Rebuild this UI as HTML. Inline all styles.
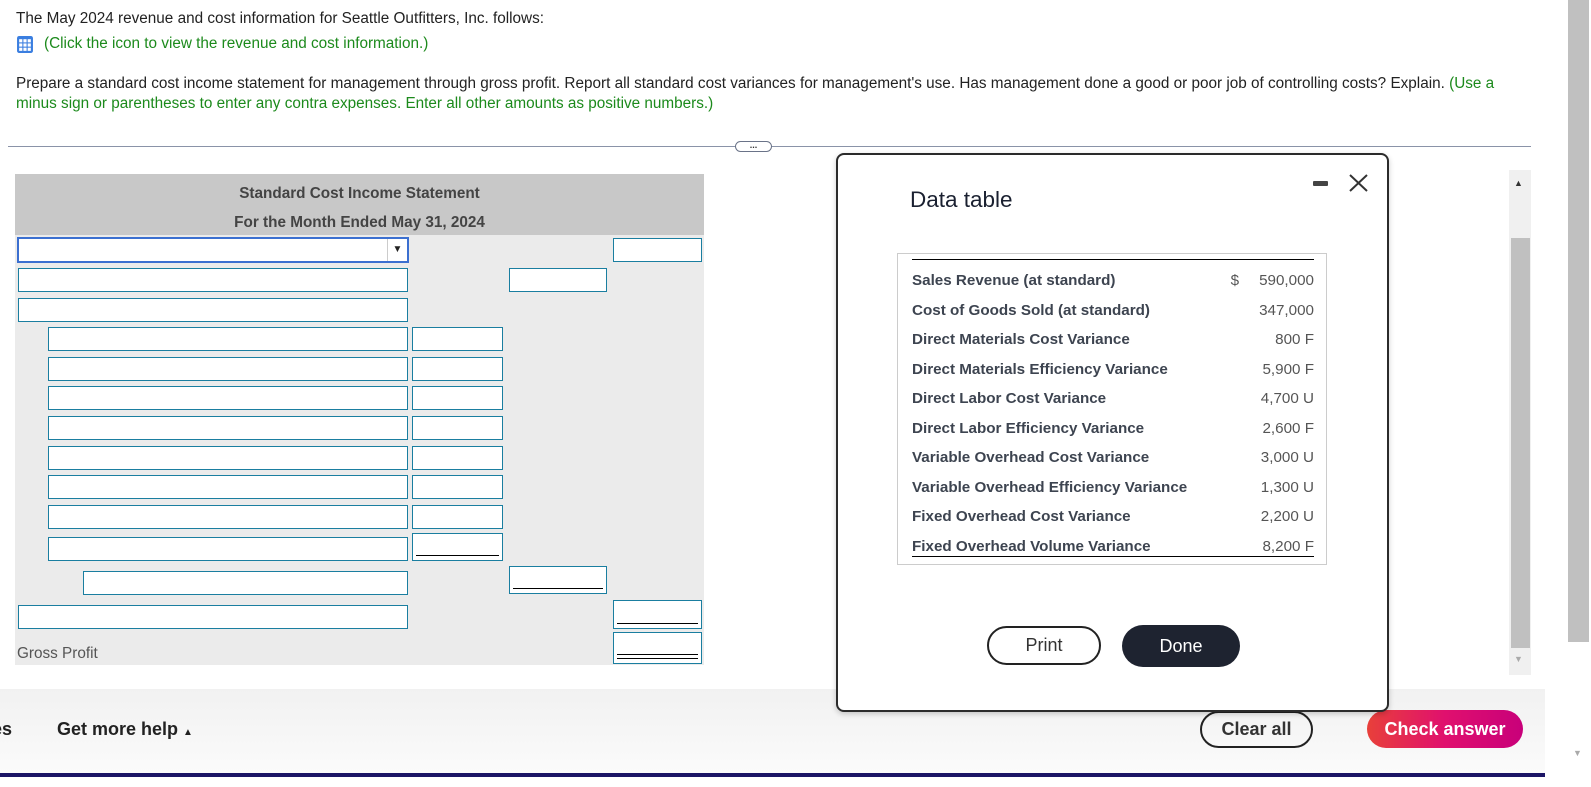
<!DOCTYPE html>
<html><head><meta charset="utf-8"><style>
*{margin:0;padding:0;box-sizing:border-box}
body{width:1591px;height:787px;position:relative;overflow:hidden;background:#fff;font-family:"Liberation Sans",Arial,sans-serif;color:#222}
.a{position:absolute}
.t{font-size:15.3px;white-space:nowrap}
.g{color:#1c8a1c}
.in{position:absolute;height:24px;border:1px solid #1a7ea0;background:#fff}
.ul::after{content:"";position:absolute;left:3px;right:3px;bottom:4px;border-top:1px solid #000}
.dul::after{content:"";position:absolute;left:3px;right:3px;bottom:4px;height:3px;border-top:1px solid #000;border-bottom:1px solid #000}
.row{position:absolute;left:912px;width:402px;font-size:15.2px;font-weight:bold;color:#3d4450}
.row span{position:absolute;right:0;font-weight:normal;color:#555}
</style></head><body>
<div class="a t" style="left:16px;top:10px">The May 2024 revenue and cost information for Seattle Outfitters, Inc. follows:</div>
<svg class="a" style="left:17px;top:36px" width="16" height="17" viewBox="0 0 15 16"><rect width="15" height="16" rx="2" fill="#3a7ee0"/><g fill="#fff"><rect x="2" y="3" width="3" height="3"/><rect x="6" y="3" width="3" height="3"/><rect x="10" y="3" width="3" height="3"/><rect x="2" y="7" width="3" height="3"/><rect x="6" y="7" width="3" height="3"/><rect x="10" y="7" width="3" height="3"/><rect x="2" y="11" width="3" height="3"/><rect x="6" y="11" width="3" height="3"/><rect x="10" y="11" width="3" height="3"/></g></svg>
<div class="a t g" style="left:44px;top:35px">(Click the icon to view the revenue and cost information.)</div>
<div class="a t" style="left:16px;top:75px">Prepare a standard cost income statement for management through gross profit. Report all standard cost variances for management's use. Has management done a good or poor job of controlling costs? Explain. <span class="g">(Use a</span></div>
<div class="a t g" style="left:16px;top:95px">minus sign or parentheses to enter any contra expenses. Enter all other amounts as positive numbers.)</div>
<div class="a" style="left:8px;top:146px;width:1523px;border-top:1px solid #8a93a8"></div>
<div class="a" style="left:735px;top:141px;width:37px;height:11px;border:1px solid #6a7388;border-radius:6px;background:#fff;font-size:9px;line-height:6px;text-align:center;font-weight:bold;color:#333">...</div>

<div class="a" style="left:15px;top:174px;width:689px;height:61px;background:#c8c8c8"></div>
<div class="a" style="left:15px;top:235px;width:689px;height:430px;background:#ebebeb"></div>
<div class="a t" style="left:15px;width:689px;text-align:center;top:185px;font-weight:bold;color:#444">Standard Cost Income Statement</div>
<div class="a t" style="left:15px;width:689px;text-align:center;top:214px;font-weight:bold;color:#444">For the Month Ended May 31, 2024</div>

<div class="in" style="left:17px;top:237px;width:392px;height:26px;border:2px solid #3b6fd0"><div class="a" style="right:0;top:0;width:20px;height:22px;border-left:1px solid #ccc;font-size:10px;text-align:center;line-height:22px">▼</div></div>
<div class="in" style="left:613px;top:238px;width:89px"></div>
<div class="in" style="left:18px;top:268px;width:390px"></div>
<div class="in" style="left:509px;top:268px;width:98px"></div>
<div class="in" style="left:18px;top:298px;width:390px"></div>
<div class="in" style="left:48px;top:327px;width:360px"></div><div class="in" style="left:412px;top:327px;width:91px"></div>
<div class="in" style="left:48px;top:357px;width:360px"></div><div class="in" style="left:412px;top:357px;width:91px"></div>
<div class="in" style="left:48px;top:386px;width:360px"></div><div class="in" style="left:412px;top:386px;width:91px"></div>
<div class="in" style="left:48px;top:416px;width:360px"></div><div class="in" style="left:412px;top:416px;width:91px"></div>
<div class="in" style="left:48px;top:446px;width:360px"></div><div class="in" style="left:412px;top:446px;width:91px"></div>
<div class="in" style="left:48px;top:475px;width:360px"></div><div class="in" style="left:412px;top:475px;width:91px"></div>
<div class="in" style="left:48px;top:505px;width:360px"></div><div class="in" style="left:412px;top:505px;width:91px"></div>
<div class="in" style="left:48px;top:537px;width:360px"></div><div class="in ul" style="left:412px;top:533px;width:91px;height:28px"></div>
<div class="in" style="left:83px;top:571px;width:325px"></div><div class="in ul" style="left:509px;top:566px;width:98px;height:28px"></div>
<div class="in" style="left:18px;top:605px;width:390px"></div><div class="in ul" style="left:613px;top:600px;width:89px;height:29px"></div>
<div class="a t" style="left:17px;top:645px;color:#555">Gross Profit</div>
<div class="in dul" style="left:613px;top:632px;width:89px;height:32px"></div>

<div class="a" style="left:0;top:689px;width:1545px;height:84px;background:linear-gradient(#f1f1f1,#fbfbfb)"></div>
<div class="a" style="left:0;top:773px;width:1545px;height:4px;background:#1c1566"></div>
<div class="a" style="left:-8px;top:719px;font-size:18px;font-weight:bold">es</div>
<div class="a" style="left:57px;top:719px;font-size:18px;font-weight:bold">Get more help <span style="font-size:10px">▲</span></div>
<div class="a" style="left:1200px;top:711px;width:113px;height:37px;border:2px solid #222;border-radius:19px;text-align:center;line-height:33px;font-size:18px;font-weight:bold;color:#333">Clear all</div>
<div class="a" style="left:1367px;top:710px;width:156px;height:38px;border-radius:19px;background:linear-gradient(90deg,#e8403a,#e0106e,#c8007a);text-align:center;line-height:38px;font-size:18px;font-weight:bold;color:#fff">Check answer</div>

<div class="a" style="left:1509px;top:170px;width:22px;height:505px;background:#f0f0f0"></div>
<div class="a" style="left:1511px;top:238px;width:19px;height:410px;background:#c0c0c0"></div>
<div class="a" style="left:1514px;top:178px;font-size:9px;color:#333">▲</div>
<div class="a" style="left:1514px;top:654px;font-size:9px;color:#aaa">▼</div>
<div class="a" style="left:1545px;top:0;width:46px;height:787px;background:#fff"></div>
<div class="a" style="left:1568px;top:0;width:21px;height:642px;background:#c0c0c0"></div>
<div class="a" style="left:1573px;top:748px;font-size:9px;color:#aaa">▼</div>

<div class="a" style="left:836px;top:153px;width:553px;height:559px;border:2px solid #2b2b2b;border-radius:8px;background:#fff;box-shadow:0 2px 6px rgba(0,0,0,.2)"></div>
<div class="a" style="left:910px;top:187px;font-size:22.5px;color:#1a2030">Data table</div>
<div class="a" style="left:1313px;top:181px;width:15px;height:5px;background:#444;border-radius:1px"></div>
<svg class="a" style="left:1349px;top:174px" width="19" height="18" viewBox="0 0 19 18"><path d="M1 1L18 17M18 1L1 17" stroke="#333" stroke-width="2"/></svg>
<div class="a" style="left:897px;top:253px;width:430px;height:312px;border:1px solid #ccc"></div>
<div class="a" style="left:912px;top:259px;width:402px;border-top:1px solid #000"></div>
<div class="a" style="left:912px;top:556px;width:402px;border-top:1px solid #000"></div>
<div class="row" style="top:272px">Sales Revenue (at standard)<span><b style="font-weight:normal;margin-right:20px">$</b>590,000</span></div>
<div class="row" style="top:302px">Cost of Goods Sold (at standard)<span>347,000</span></div>
<div class="row" style="top:331px">Direct Materials Cost Variance<span>800 F</span></div>
<div class="row" style="top:361px">Direct Materials Efficiency Variance<span>5,900 F</span></div>
<div class="row" style="top:390px">Direct Labor Cost Variance<span>4,700 U</span></div>
<div class="row" style="top:420px">Direct Labor Efficiency Variance<span>2,600 F</span></div>
<div class="row" style="top:449px">Variable Overhead Cost Variance<span>3,000 U</span></div>
<div class="row" style="top:479px">Variable Overhead Efficiency Variance<span>1,300 U</span></div>
<div class="row" style="top:508px">Fixed Overhead Cost Variance<span>2,200 U</span></div>
<div class="row" style="top:538px">Fixed Overhead Volume Variance<span>8,200 F</span></div>
<div class="a" style="left:987px;top:626px;width:114px;height:39px;border:2px solid #222;border-radius:20px;text-align:center;line-height:35px;font-size:18px;color:#333">Print</div>
<div class="a" style="left:1122px;top:625px;width:118px;height:42px;border-radius:21px;background:#1e2330;text-align:center;line-height:42px;font-size:18px;color:#fff">Done</div>
</body></html>
